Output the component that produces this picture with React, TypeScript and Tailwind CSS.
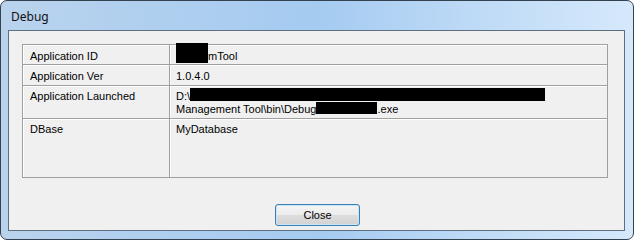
const rows = [
  { label: "Application ID", h: "h-[20px]", pt: "pt-[5px]" },
  { label: "Application Ver", h: "h-[21px]", pt: "pt-[5px]" },
  { label: "Application Launched", h: "h-[33px]", pt: "pt-[4px]" },
  { label: "DBase", h: "h-[59px]", pt: "pt-[4px]" },
];

function Redact({ className }: { className: string }) {
  return <div className={"shrink-0 bg-black " + className} />;
}

function ValueCell({ index }: { index: number }) {
  if (index === 0) {
    return (
      <div className="flex items-start">
        <Redact className="w-[32px] h-[20px] -mt-[7px]" />
        <span>mTool</span>
      </div>
    );
  }
  if (index === 1) return <span>1.0.4.0</span>;
  if (index === 2) {
    return (
      <div className="flex flex-col">
        <div className="flex items-start">
          <span>D:\</span>
          <Redact className="w-[355px] h-[13px] -mt-[2px]" />
        </div>
        <div className="flex items-start">
          <span>Management Tool\bin\Debug</span>
          <Redact className="w-[61px] h-[12px] -mt-[1px]" />
          <span>.exe</span>
        </div>
      </div>
    );
  }
  return <span>MyDatabase</span>;
}

export default function App() {
  return (
    <div className="w-[634px] h-[240px] flex flex-col rounded-[7px] border border-[#34414f] bg-gradient-to-r from-[#b9d3ed] via-[#a5cbf1] to-[#d6e9fb] overflow-hidden text-black font-['Liberation_Sans',Arial,sans-serif] text-[11px] leading-[13px]">
      {/* title bar */}
      <div className="h-[29px] shrink-0 pt-[8px] pl-[10px]">
        <span className="font-['Noto_Sans',sans-serif] text-[12px] leading-[16px] text-[#111111]">
          Debug
        </span>
      </div>

      {/* client area */}
      <div className="ml-[7px] mr-[8px] mb-[8px] flex-1 flex flex-col border border-[#5f6f80] bg-[#f0f0f0]">
        <div className="relative mt-[13px] ml-[13px] mr-[16px] flex flex-col border-t border-l border-r border-[#a0a0a0]">
          {rows.map((r, i) => (
            <div
              key={r.label}
              className={"flex border-b border-[#a0a0a0] " + r.h}
            >
              <div
                className={
                  "w-[147px] shrink-0 border-r border-[#a0a0a0] pl-[7px] shadow-[inset_1px_1px_0_#ffffff] " +
                  r.pt
                }
              >
                {r.label}
              </div>
              <div
                className={
                  "flex-1 pl-[6px] shadow-[inset_1px_1px_0_#ffffff] " + r.pt
                }
              >
                <ValueCell index={i} />
              </div>
            </div>
          ))}
        </div>

        <button className="mt-[26px] self-center ml-[2px] w-[85px] h-[22px] rounded-[3px] border border-[#3c7fb1] bg-[linear-gradient(to_bottom,#f4f4f4_0%,#ececec_50%,#dedede_50%,#d2d2d2_100%)] shadow-[inset_0_0_0_1px_#c8e6f9] text-[11px] leading-[13px] text-black">
          Close
        </button>
      </div>
    </div>
  );
}
